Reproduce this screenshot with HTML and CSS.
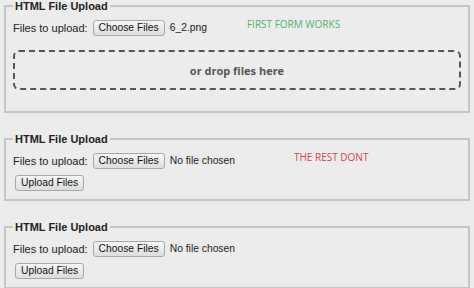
FILE: index.html
```html
<!DOCTYPE html>
<html lang="en">
<head>
<meta charset="utf-8">
<title>HTML File Upload</title>
<link rel="stylesheet" href="styles.css">
</head>
<body>
<div class="page">
  <form class="upload">
    <fieldset class="box">
      <legend class="legend">HTML File Upload</legend>
      <div class="row">
        <span class="label">Files to upload:</span>
        <button type="button" class="btn">Choose Files</button>
        <span class="fname">6_2.png</span>
        <span class="note note-ok">FIRST FORM WORKS</span>
      </div>
      <div class="drop">or drop files here</div>
    </fieldset>
  </form>
  <form class="upload">
    <fieldset class="box">
      <legend class="legend">HTML File Upload</legend>
      <div class="row">
        <span class="label">Files to upload:</span>
        <button type="button" class="btn">Choose Files</button>
        <span class="fname">No file chosen</span>
        <span class="note note-bad">THE REST DONT</span>
      </div>
      <button type="button" class="btn btn-submit">Upload Files</button>
    </fieldset>
  </form>
  <form class="upload">
    <fieldset class="box">
      <legend class="legend">HTML File Upload</legend>
      <div class="row">
        <span class="label">Files to upload:</span>
        <button type="button" class="btn">Choose Files</button>
        <span class="fname">No file chosen</span>
      </div>
      <button type="button" class="btn btn-submit">Upload Files</button>
    </fieldset>
  </form>
</div>
</body>
</html>
```

FILE: styles.css
```css
html, body {
  margin: 0;
  padding: 0;
  background: #ececec;
}

body {
  font-family: "Liberation Sans", Arial, sans-serif;
  color: #222;
  overflow: hidden;
}

.page {
  padding: 0 4px;
}

.upload {
  margin: 0 0 20px;
}

.box {
  margin: 0;
  padding: 8px 7px 8px 7px;
  border: 2px solid #c4c4c4;
  min-width: 0;
}

.legend {
  padding: 0 2px;
  font-size: 11px;
  line-height: 12px;
  font-weight: bold;
  color: #222;
}

.row {
  display: flex;
  align-items: center;
  height: 16px;
}

.label {
  font-size: 11px;
  line-height: 14px;
  margin-right: 5px;
}

.btn {
  display: block;
  height: 16px;
  margin: 0;
  padding: 0 5px;
  border: 1px solid #a6a6a6;
  border-radius: 3px;
  background: linear-gradient(#f7f7f7, #dddddd);
  font-family: "Liberation Sans", Arial, sans-serif;
  font-size: 10.3px;
  line-height: 14px;
  color: #111;
}

.fname {
  margin-left: 5px;
  font-size: 10.3px;
  line-height: 14px;
}

.note {
  align-self: flex-start;
  font-family: "Open Sans", sans-serif;
  font-size: 10px;
  line-height: 9px;
}

.note-ok {
  margin-left: 40px;
  color: #4cb56a;
}

.note-bad {
  margin-left: 59px;
  color: #cf3f4b;
}

.drop {
  height: 36px;
  margin: 14px 0 13px;
  border: 2px dashed #555;
  border-radius: 6px;
  display: flex;
  align-items: center;
  justify-content: center;
  font-family: "Open Sans", sans-serif;
  font-weight: bold;
  font-size: 11px;
  color: #555;
}

.btn-submit {
  margin: 6px 0 0 2px;
}
```
